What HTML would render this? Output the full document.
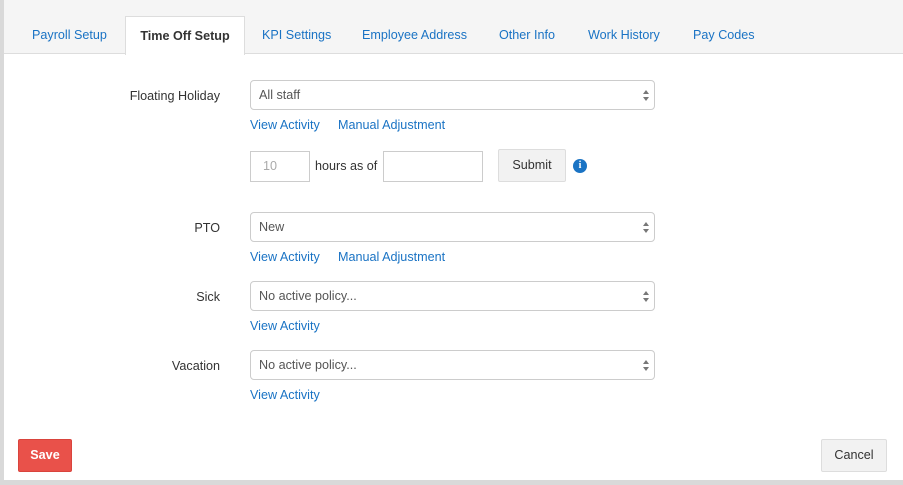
<!DOCTYPE html>
<html><head><style>
body{margin:0;width:903px;height:485px;background:#d9d9d9;font-family:"Liberation Sans",Arial,sans-serif;font-size:12.6px;position:relative;overflow:hidden}
.modal{position:absolute;left:4px;top:0;width:899px;height:480px;background:#fff}
.tabs{position:absolute;left:0;top:0;width:899px;height:54px;background:#f5f5f5;border-bottom:1px solid #ddd;box-sizing:border-box}
.tab{position:absolute;top:16px;height:38px;line-height:38px;color:#1a73c4}
.tab.active{background:#fff;border:1px solid #ddd;border-bottom:none;color:#333;font-weight:bold;box-sizing:border-box;height:39px}
.lbl{position:absolute;color:#333;text-align:right;width:216px;left:0}
.sel{position:absolute;left:246px;width:405px;height:30px;border:1px solid #ccc;border-radius:4px;box-sizing:border-box;color:#555;padding-left:8px;line-height:29px}
.sel:after{content:"";position:absolute;right:5px;top:9px;border-left:3px solid transparent;border-right:3px solid transparent;border-bottom:4px solid #777}
.sel:before{content:"";position:absolute;right:5px;top:16px;border-left:3px solid transparent;border-right:3px solid transparent;border-top:4px solid #777}
.lnk{position:absolute;color:#1a73c4}
.inp{position:absolute;border:1px solid #ccc;box-sizing:border-box;height:31px}
</style></head><body>
<div class="modal">
<div class="tabs">
<div class="tab" style="left:28px">Payroll Setup</div>
<div class="tab active" style="left:121px;width:120px;text-align:center">Time Off Setup</div>
<div class="tab" style="left:258px">KPI Settings</div>
<div class="tab" style="left:358px">Employee Address</div>
<div class="tab" style="left:495px">Other Info</div>
<div class="tab" style="left:584px">Work History</div>
<div class="tab" style="left:689px">Pay Codes</div>
</div>
<div class="lbl" style="top:89px">Floating Holiday</div>
<div class="sel" style="top:80px">All staff</div>
<div class="lnk" style="left:246px;top:118px">View Activity</div>
<div class="lnk" style="left:334px;top:118px">Manual Adjustment</div>
<div class="inp" style="left:246px;top:151px;width:60px;color:#aaa;line-height:29px;padding-left:12px">10</div>
<div style="position:absolute;left:311px;top:159px;color:#333">hours as of</div>
<div class="inp" style="left:379px;top:151px;width:100px"></div>
<div style="position:absolute;left:494px;top:149px;width:68px;height:33px;background:#f2f2f2;border:1px solid #ddd;box-sizing:border-box;border-radius:2px;text-align:center;line-height:31px;color:#333">Submit</div>
<div style="position:absolute;left:569px;top:159px;width:14px;height:14px;border-radius:50%;background:#1a73c4;color:#fff;font-size:10px;font-weight:bold;text-align:center;line-height:14px;font-family:'Liberation Serif',serif">i</div>
<div class="lbl" style="top:221px">PTO</div>
<div class="sel" style="top:212px">New</div>
<div class="lnk" style="left:246px;top:250px">View Activity</div>
<div class="lnk" style="left:334px;top:250px">Manual Adjustment</div>
<div class="lbl" style="top:290px">Sick</div>
<div class="sel" style="top:281px">No active policy...</div>
<div class="lnk" style="left:246px;top:319px">View Activity</div>
<div class="lbl" style="top:359px">Vacation</div>
<div class="sel" style="top:350px">No active policy...</div>
<div class="lnk" style="left:246px;top:388px">View Activity</div>
<div style="position:absolute;left:14px;top:439px;width:54px;height:33px;background:#e9514a;border:1px solid #d9443d;box-sizing:border-box;border-radius:2px;color:#fff;font-weight:bold;text-align:center;line-height:31px">Save</div>
<div style="position:absolute;left:817px;top:439px;width:66px;height:33px;background:#f2f2f2;border:1px solid #ddd;box-sizing:border-box;border-radius:2px;color:#333;text-align:center;line-height:31px">Cancel</div>
</div>
</body></html>
